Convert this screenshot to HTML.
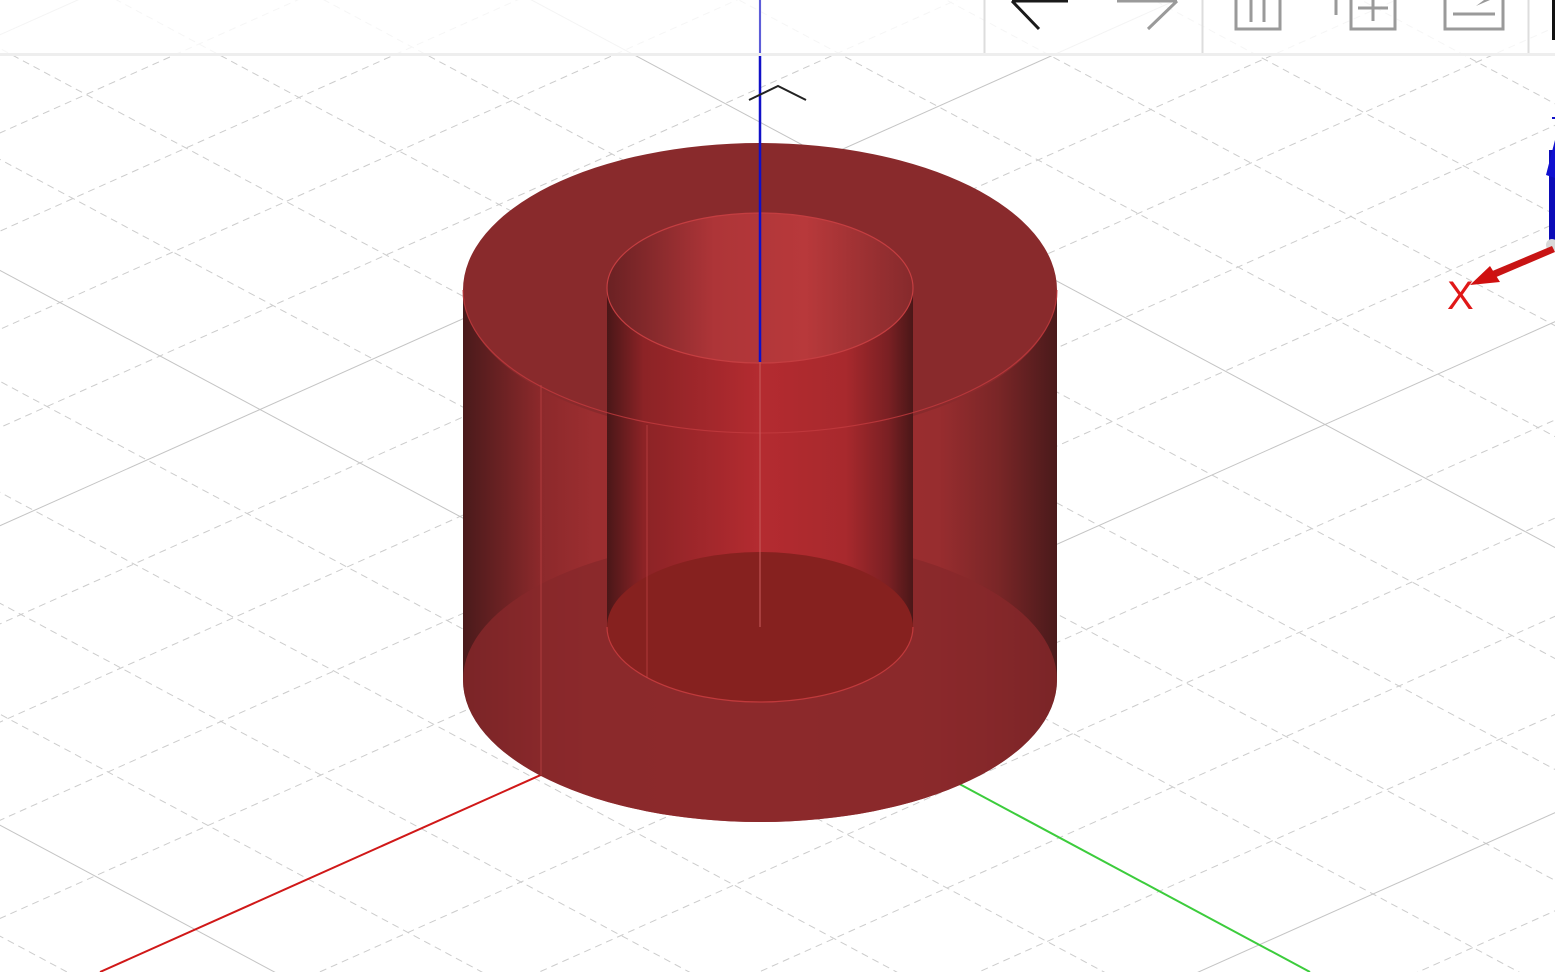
<!DOCTYPE html>
<html><head><meta charset="utf-8"><style>
html,body{margin:0;padding:0;background:#fff;overflow:hidden;width:1555px;height:972px}
svg{display:block;position:fixed;left:0;top:0}
</style></head><body>
<svg id="s" width="1555" height="972" viewBox="0 0 1555 972" xmlns="http://www.w3.org/2000/svg">
<defs>
<linearGradient id="outer" x1="463" y1="0" x2="1057" y2="0" gradientUnits="userSpaceOnUse">
<stop offset="0" stop-color="#4a1a1b"/><stop offset="0.13" stop-color="#8c292b"/><stop offset="0.22" stop-color="#9c2e30"/>
<stop offset="0.5" stop-color="#a02f31"/><stop offset="0.8" stop-color="#982d2f"/><stop offset="0.9" stop-color="#7a2627"/><stop offset="1" stop-color="#4a1a1b"/>
</linearGradient>
<linearGradient id="inner" x1="607" y1="0" x2="913" y2="0" gradientUnits="userSpaceOnUse">
<stop offset="0" stop-color="#4a1718"/><stop offset="0.12" stop-color="#8c2326"/><stop offset="0.5" stop-color="#b42b30"/>
<stop offset="0.78" stop-color="#a8292d"/><stop offset="0.92" stop-color="#7a2023"/><stop offset="1" stop-color="#4a1718"/>
</linearGradient>
<linearGradient id="hole" x1="607" y1="0" x2="913" y2="0" gradientUnits="userSpaceOnUse">
<stop offset="0" stop-color="#6a2123"/><stop offset="0.35" stop-color="#ae3538"/><stop offset="0.65" stop-color="#b8393b"/>
<stop offset="1" stop-color="#862a2c"/>
</linearGradient>
</defs>
<g id="grid"></g>
<line x1="760" y1="677" x2="100" y2="972" stroke="#d01818" stroke-width="2"/>
<line x1="760" y1="677" x2="1310" y2="972" stroke="#3ccc3c" stroke-width="2"/>
<path d="M463,290 L463,680 A297,142 0 0 0 1057,680 L1057,290 Z" fill="url(#outer)"/>
<ellipse cx="760" cy="680" rx="297" ry="142" fill="#87282a" opacity="0.8"/>
<path d="M463,290 A297,147 0 0 1 1057,290 A297,147 0 0 1 463,290 Z M607,288 A153,75 0 0 0 913,288 A153,75 0 0 0 607,288 Z" fill="#892a2c" fill-rule="evenodd"/>
<path d="M607,288 L607,627 A153,75 0 0 0 913,627 L913,288 Z" fill="url(#inner)"/>
<ellipse cx="760" cy="627" rx="153" ry="75" fill="#86211f"/>
<path d="M607,627 A153,75 0 0 0 913,627" fill="none" stroke="#c03a3c" stroke-width="1.2"/>
<ellipse cx="760" cy="288" rx="153" ry="75" fill="url(#hole)" stroke="#c43e41" stroke-width="1.2"/>
<path d="M463,290 A297,143 0 0 0 1057,290" fill="none" stroke="#c23b3e" stroke-width="1.2" opacity="0.8"/>
<line x1="541" y1="385" x2="541" y2="775" stroke="#c24446" stroke-width="1" opacity="0.7"/>
<line x1="647" y1="425" x2="647" y2="678" stroke="#c24446" stroke-width="1" opacity="0.7"/>
<line x1="760" y1="362" x2="760" y2="627" stroke="#c85a5c" stroke-width="1.5" opacity="0.7"/>
<line x1="760" y1="0" x2="760" y2="362" stroke="#1010c8" stroke-width="2.5"/>
<polyline points="749,100 778,86 806,100" fill="none" stroke="#222" stroke-width="2"/>
<rect x="1549" y="150" width="6" height="92" fill="#0c0cb8"/>
<path d="M1546,175 L1555,140 L1555,178 Z" fill="#1010d0"/>
<line x1="1552" y1="118" x2="1555" y2="118" stroke="#1010c8" stroke-width="2"/>
<circle cx="1552" cy="245" r="6" fill="#d8d8d8"/>
<path d="M1552,246 L1555,252 L1494,278 L1490,272 Z" fill="#c81414"/>
<path d="M1470,285 L1490,266 L1500,282 Z" fill="#d01010"/>
<text x="1447" y="309" font-family="Liberation Sans, sans-serif" font-size="40" fill="#e01818">X</text>
<rect x="0" y="0" width="1555" height="53" fill="#fff" opacity="0.82"/>
<line x1="760" y1="0" x2="760" y2="53" stroke="#1010c8" stroke-width="2" opacity="0.6"/>
<rect x="0" y="53" width="1555" height="3" fill="#eeeeee"/>
<line x1="984.5" y1="0" x2="984.5" y2="53" stroke="#dddddd" stroke-width="2"/>
<line x1="1202.5" y1="0" x2="1202.5" y2="53" stroke="#dddddd" stroke-width="2"/>
<line x1="1528.5" y1="0" x2="1528.5" y2="53" stroke="#dddddd" stroke-width="2"/>
<path d="M1068,1 L1012,1 M1012,1 L1039,29" stroke="#1a1a1a" stroke-width="3" fill="none"/>
<path d="M1117,1 L1177,1 M1177,1 L1148,29" stroke="#9a9a9a" stroke-width="3" fill="none"/>
<path d="M1236,-2 L1236,29 L1280,29 L1280,-2 M1251,0 L1251,22 M1264,0 L1264,22" stroke="#9a9a9a" stroke-width="3" fill="none"/>
<path d="M1336,0 L1336,15 M1351,-2 L1351,29 L1395,29 L1395,-2 M1373,0 L1373,21 M1358,8 L1388,8" stroke="#9a9a9a" stroke-width="3" fill="none"/>
<path d="M1445,-2 L1445,29 L1503,29 L1503,-2 M1453,14 L1495,14" stroke="#9a9a9a" stroke-width="3" fill="none"/>
<path d="M1476,6 L1490,0 L1484,0 Z" fill="#9a9a9a"/>
<rect x="1552" y="0" width="3" height="40" fill="#111"/>
</svg>
<script>
(function(){
var g=document.getElementById('grid'),ns='http://www.w3.org/2000/svg';
var O=[760,677],a=[-113,50.5],b=[100,53.5],N=20;
function P(u,v){return [O[0]+u*a[0]+v*b[0],O[1]+u*a[1]+v*b[1]];}
function L(p,q,major){var l=document.createElementNS(ns,'line');l.setAttribute('x1',p[0]);l.setAttribute('y1',p[1]);l.setAttribute('x2',q[0]);l.setAttribute('y2',q[1]);
l.setAttribute('stroke',major?'#c4c4c4':'#cccccc');l.setAttribute('stroke-width','1');if(!major)l.setAttribute('stroke-dasharray','7 5');g.appendChild(l);}
for(var i=-N;i<=N;i++){
 var maj=(i%5==0);
 if(i==0){L(P(0,-N),P(0,0),true);L(P(-N,0),P(0,0),true);continue;}
 L(P(i,-N),P(i,N),maj);
 L(P(-N,i),P(N,i),maj);
}
})();
</script>
</body></html>
